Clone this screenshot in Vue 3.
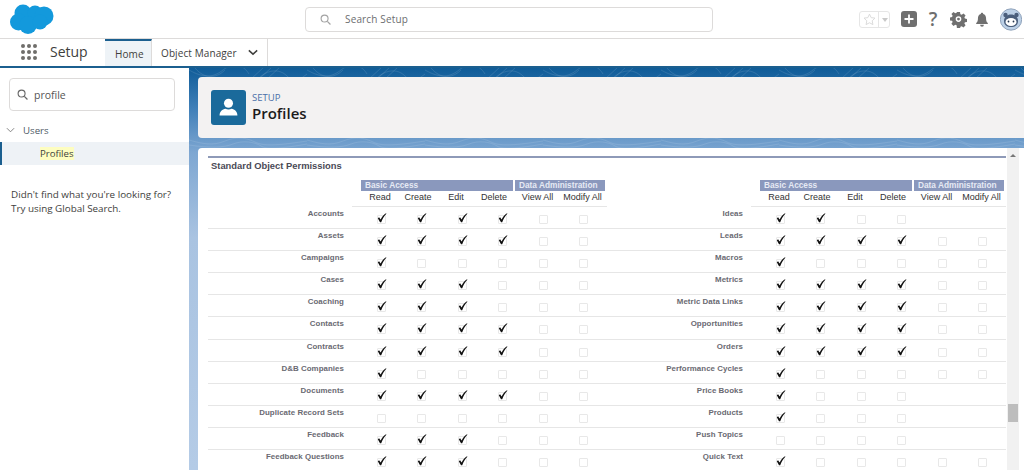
<template>
  <div class="page">
    <!-- Global header -->
    <header class="top">
      <svg class="logo" viewBox="0 0 44 30" width="44" height="30">
        <g fill="#1399dc">
          <circle cx="13" cy="9" r="8.5" />
          <circle cx="25" cy="9" r="7.5" />
          <circle cx="34" cy="12" r="9.5" />
          <circle cx="8.500" cy="18" r="8.500" />
          <circle cx="18" cy="21" r="9" />
          <circle cx="30" cy="18" r="7.500" />
        </g>
      </svg>
      <div class="global-search">
        <svg class="search-icon" viewBox="0 0 12 12" width="11" height="11">
          <circle cx="5" cy="5" r="3.800" fill="none" stroke="#a3a3a3" stroke-width="1.200" />
          <path d="M8 8l3.400 3.400" stroke="#a3a3a3" stroke-width="1.400" />
        </svg>
        <span>Search Setup</span>
      </div>
      <div class="tools">
        <div class="fav">
          <span class="fav-star">
            <svg viewBox="0 0 14 14" width="13" height="13">
              <path d="M7 1.200l1.800 3.800 4.100.5-3 2.900.8 4.100L7 10.500l-3.700 2 .8-4.100-3-2.900 4.100-.5z" fill="none" stroke="#d8d8d8" stroke-width="1" />
            </svg>
          </span>
          <span class="fav-drop"></span>
        </div>
        <svg class="add" viewBox="0 0 16 16" width="16" height="16">
          <rect width="16" height="16" rx="3" fill="#6f6f6f" />
          <path d="M8 3.500v9M3.500 8h9" stroke="#fff" stroke-width="1.800" />
        </svg>
        <span class="help">?</span>
        <svg class="gear" viewBox="0 0 18 18" width="17" height="17">
          <path d="M7.400 1h3.200l.4 2.200 1.400.6 1.900-1.300 2.200 2.200-1.300 1.900.6 1.400 2.200.4v3.200l-2.200.4-.6 1.400 1.300 1.900-2.200 2.200-1.900-1.300-1.400.6-.4 2.200H7.400L7 15.200l-1.400-.6-1.900 1.300-2.200-2.200 1.300-1.900-.6-1.400L0 10V6.800l2.200-.4.6-1.400-1.300-1.900 2.200-2.200 1.900 1.300 1.400-.6z" fill="#6f6f6f" transform="translate(0 .2) scale(1 .98)" />
          <circle cx="9" cy="8.600" r="3" fill="#fff" />
          <circle cx="9" cy="8.600" r="1.500" fill="#6f6f6f" />
        </svg>
        <svg class="bell" viewBox="0 0 14 16" width="14" height="15">
          <path d="M7 .8c.8 0 1.300.5 1.300 1.200 2 .6 3 2.200 3 4.300 0 3 .6 4.200 1.900 5.500v.9H.8v-.9C2.100 10.500 2.700 9.300 2.700 6.300c0-2.100 1-3.700 3-4.300 0-.7.5-1.200 1.300-1.200z" fill="#6f6f6f" />
          <path d="M5 13.700h4a2 2 0 0 1-4 0z" fill="#6f6f6f" />
        </svg>
        <svg class="avatar" viewBox="0 0 22 23" width="22" height="23">
          <circle cx="11" cy="11.500" r="10.700" fill="#bcd0e6" stroke="#7f93ad" stroke-width=".8" />
          <circle cx="5.500" cy="7" r="2.200" fill="#4b5f7c" />
          <circle cx="16.500" cy="7" r="2.200" fill="#4b5f7c" />
          <path d="M4 13c0-4 3-6.500 7-6.500s7 2.500 7 6.500-3 6-7 6-7-2-7-6z" fill="#4b5f7c" />
          <ellipse cx="11" cy="14" rx="5.500" ry="4" fill="#fff" />
          <circle cx="8.500" cy="13.500" r=".9" fill="#26364d" />
          <circle cx="13.500" cy="13.500" r=".9" fill="#26364d" />
        </svg>
      </div>
    </header>

    <!-- App nav -->
    <nav class="nav">
      <div class="launcher">
        <span v-for="n in 9" :key="n" class="dot"></span>
      </div>
      <span class="app-name">Setup</span>
      <a class="tab active">Home</a>
      <a class="tab">
        Object Manager
        <svg viewBox="0 0 12 8" width="10" height="7" class="tab-chevron">
          <path d="M1 1.500l5 4.500 5-4.500" fill="none" stroke="#3e3e3c" stroke-width="1.800" />
        </svg>
      </a>
    </nav>

    <div class="main">
      <!-- Setup tree -->
      <aside class="side">
        <div class="quick-find">
          <svg viewBox="0 0 12 12" width="11" height="11">
            <circle cx="5" cy="5" r="3.800" fill="none" stroke="#666" stroke-width="1.200" />
            <path d="M8 8l3.400 3.400" stroke="#666" stroke-width="1.400" />
          </svg>
          <span>profile</span>
        </div>
        <div class="tree-head">
          <svg viewBox="0 0 10 6" width="9" height="6">
            <path d="M1 1l4 4 4-4" fill="none" stroke="#777" stroke-width="1" />
          </svg>
          <span>Users</span>
        </div>
        <div class="tree-item"><mark>Profiles</mark></div>
        <p class="hint">Didn't find what you're looking for?<br />Try using Global Search.</p>
      </aside>

      <section class="content">
        <!-- topo lines behind the cards -->
        <svg class="topo" width="836" height="90">
          <defs>
            <pattern id="topo" width="118" height="90" patternUnits="userSpaceOnUse">
              <g fill="none" stroke="#fff" stroke-opacity=".16" stroke-width=".7">
                <path d="M0 2c14 8 24 8 34 0s20-6 26 4M6 0c10 12 22 10 30 2M70 10c8-8 20-10 28-2s12 4 20-2M74 0L62 11M82 0L70 11M90 0L78 11" />
                <path d="M0 72c14 4 24 6 36 1s22-3 30 1 20 4 52-1M0 77c20 3 34 3 44-1s22-2 28 2 24 2 46-2" />
              </g>
            </pattern>
          </defs>
          <rect width="836" height="90" fill="url(#topo)" />
        </svg>

        <div class="hero">
          <div class="hero-icon">
            <svg viewBox="0 0 20 20" width="21" height="21">
              <circle cx="10" cy="6" r="4.300" fill="#fff" />
              <path d="M1.500 17.500c0-3.800 2.800-5.800 5.500-6.300 1.800 1 4.200 1 6 0 2.700.5 5.500 2.500 5.500 6.300z" fill="#fff" />
            </svg>
          </div>
          <div class="hero-text">
            <div class="crumb">SETUP</div>
            <h1>Profiles</h1>
          </div>
        </div>

        <div class="panel">
          <div class="panel-body">
            <h2>Standard Object Permissions</h2>
            <div class="head-row">
              <template v-for="side in 2" :key="side">
                <span></span>
                <div class="group basic">
                  <div class="band">Basic Access</div>
                  <div class="cols four">
                    <span v-for="c in basicCols" :key="c">{{ c }}</span>
                  </div>
                </div>
                <div class="group admin">
                  <div class="band">Data Administration</div>
                  <div class="cols two">
                    <span v-for="c in adminCols" :key="c">{{ c }}</span>
                  </div>
                </div>
              </template>
            </div>
            <div v-for="(row, i) in rows" :key="i" class="row">
              <template v-for="side in row" :key="side[0]">
                <div class="obj">{{ side[0] }}</div>
                <div v-for="(p, k) in side[1].split('')" :key="k" class="cell">
                  <span v-if="p !== '-'" class="box">
                    <svg v-if="p === 'x'" class="tick" viewBox="0 0 10 10" width="10" height="10">
                      <path d="M.8 5.200l1.300-1 1.500 2.200C4.800 4 6.500 1.800 9 .2l.4.5C7.200 3 5.500 5.800 4.200 9.300H3z" fill="#111" />
                    </svg>
                  </span>
                </div>
              </template>
            </div>
          </div>
          <div class="scrollbar">
            <span class="arrow"></span>
            <span class="thumb"></span>
          </div>
        </div>
      </section>
    </div>
  </div>
</template>

<script setup>
const basicCols = ['Read', 'Create', 'Edit', 'Delete']
const adminCols = ['View All', 'Modify All']

// x = ticked, o = empty box, - = no box
const rows = [
  [['Accounts', 'xxxxoo'], ['Ideas', 'xxoo--']],
  [['Assets', 'xxxxoo'], ['Leads', 'xxxxoo']],
  [['Campaigns', 'xooooo'], ['Macros', 'xooooo']],
  [['Cases', 'xxxooo'], ['Metrics', 'xxxxoo']],
  [['Coaching', 'xxxooo'], ['Metric Data Links', 'xxxxoo']],
  [['Contacts', 'xxxxoo'], ['Opportunities', 'xxxxoo']],
  [['Contracts', 'xxxxoo'], ['Orders', 'xxxxoo']],
  [['D&B Companies', 'xooooo'], ['Performance Cycles', 'xooooo']],
  [['Documents', 'xxxxoo'], ['Price Books', 'xooo--']],
  [['Duplicate Record Sets', 'oooooo'], ['Products', 'xooo--']],
  [['Feedback', 'xxxooo'], ['Push Topics', 'oooo--']],
  [['Feedback Questions', 'xxxooo'], ['Quick Text', 'xooooo']]
]
</script>

<style>
html, body {
  margin: 0;
  background: #fff;
}
</style>

<style scoped>
.page {
  width: 1024px;
  height: 470px;
  overflow: hidden;
  display: flex;
  flex-direction: column;
  font-family: "Open Sans", "Liberation Sans", sans-serif;
  color: #3e3e3c;
}

/* Header */
.top {
  height: 38px;
  flex: none;
  display: flex;
  align-items: center;
  border-bottom: 1px solid #dddbda;
}
.logo {
  margin: 0 0 0 10px;
  flex: none;
}
.global-search {
  width: 408px;
  height: 25px;
  margin-left: 251px;
  flex: none;
  display: flex;
  align-items: center;
  box-sizing: border-box;
  border: 1px solid #dddbda;
  border-radius: 4px;
  padding-left: 14px;
  font-size: 10px;
  color: #6b6d70;
  letter-spacing: .15px;
}
.search-icon {
  margin-right: 14px;
}
.tools {
  display: flex;
  align-items: center;
  margin-left: 146px;
}
.fav {
  display: flex;
  width: 31px;
  height: 17px;
  box-sizing: border-box;
  border: 1px solid #e6e6e6;
  border-radius: 3px;
}
.fav-star {
  width: 18px;
  border-right: 1px solid #e6e6e6;
  display: flex;
  align-items: center;
  justify-content: center;
}
.fav-drop {
  flex: 1;
  position: relative;
}
.fav-drop::after {
  content: '';
  position: absolute;
  left: 3px;
  top: 6px;
  border: 3px solid transparent;
  border-top: 4px solid #c9c9c9;
}
.add {
  margin-left: 11px;
}
.help {
  width: 16px;
  margin-left: 8px;
  text-align: center;
  font-size: 19px;
  font-weight: 600;
  color: #6f6f6f;
  line-height: 20px;
}
.gear {
  margin-left: 9px;
}
.bell {
  margin-left: 8px;
}
.avatar {
  margin-left: 11px;
}

/* Nav */
.nav {
  height: 27px;
  flex: none;
  display: flex;
  align-items: stretch;
}
.launcher {
  width: 17px;
  height: 17px;
  margin: 5px 0 0 21px;
  display: grid;
  grid-template-columns: repeat(3, 4px);
  grid-auto-rows: 4px;
  gap: 2px;
}
.dot {
  background: #706e6b;
  border-radius: 50%;
}
.app-name {
  margin-left: 12px;
  width: 55px;
  font-size: 14px;
  line-height: 26px;
  color: #3e3e3c;
}
.tab {
  display: flex;
  align-items: center;
  padding: 0 9px;
  font-size: 10px;
  color: #3e3e3c;
  border-right: 1px solid #dddbda;
  letter-spacing: .1px;
}
.tab.active {
  background: #eef3f7;
  border-top: 2px solid #1b5f8f;
  padding: 0 10px;
  width: 47px;
  box-sizing: border-box;
}
.tab-chevron {
  margin-left: 11px;
}

/* Body */
.main {
  flex: 1;
  min-height: 0;
  display: flex;
  border-top: 2px solid #1b5f8f;
}
.side {
  width: 189px;
  flex: none;
  padding-top: 10px;
  box-sizing: border-box;
}
.quick-find {
  width: 166px;
  height: 33px;
  margin-left: 9px;
  box-sizing: border-box;
  border: 1px solid #dddbda;
  border-radius: 4px;
  display: flex;
  align-items: center;
  gap: 6px;
  padding-left: 7px;
  font-size: 10.500px;
  color: #555;
}
.tree-head {
  display: flex;
  align-items: center;
  gap: 8px;
  margin: 11px 0 0 6px;
  height: 16px;
  font-size: 9.700px;
  color: #4f5a66;
}
.tree-item {
  height: 23px;
  margin-top: 4px;
  background: #eef2f6;
  border-left: 2px solid #1b5f8f;
  padding-left: 38px;
  font-size: 9.600px;
  line-height: 23px;
}
mark {
  background: #fdfdc0;
  color: #3e3e3c;
}
.hint {
  margin: 22px 0 0 11px;
  font-size: 9.850px;
  line-height: 14px;
  color: #3e3e3c;
  white-space: nowrap;
}

/* Right side */
.content {
  flex: 1;
  min-width: 0;
  position: relative;
  padding: 9px 0 0 9px;
  box-sizing: border-box;
  background: linear-gradient(#0f5c98 0, #3f7fb8 40px, #7ea7d2 85px, #a9c3e1 170px, #b4cbe6 400px);
}
.topo {
  position: absolute;
  left: 0;
  top: 0;
}
.hero {
  position: relative;
  height: 61px;
  background: #f3f2f2;
  border-radius: 4px 0 0 4px;
  display: flex;
  align-items: center;
  gap: 6px;
  padding-left: 13px;
}
.hero-icon {
  width: 35px;
  height: 35px;
  background: #1a6a9b;
  border-radius: 3px;
  display: flex;
  align-items: center;
  justify-content: center;
}
.hero-text {
  margin-bottom: 1px;
}
.crumb {
  font-size: 9.500px;
  line-height: 12px;
  color: #4a6fa8;
}
h1 {
  margin: 0;
  font-size: 15px;
  line-height: 18px;
  font-weight: 600;
  color: #1b1b1b;
}
.panel {
  position: relative;
  margin-top: 10px;
  height: 322px;
  background: #fff;
  display: flex;
  overflow: hidden;
  border-radius: 4px 0 0 0;
}
.panel-body {
  width: 798px;
  margin-left: 10px;
  padding-top: 8px;
  font-family: "Liberation Sans", Arial, sans-serif;
}
h2 {
  margin: 0;
  height: 24px;
  border-top: 2px solid #8e9ab8;
  box-sizing: border-box;
  padding: 2px 0 0 3px;
  font-size: 9.400px;
  line-height: 12px;
  font-weight: 700;
  color: #4a4a56;
}
.head-row {
  display: grid;
  grid-template-columns: 153px 154px 90px 155px 154px 90px;
  height: 27px;
}
.band {
  height: 11px;
  background: #8a98bd;
  padding-left: 4px;
  font-size: 8.300px;
  line-height: 11px;
  font-weight: 700;
  color: #e6eaf4;
  white-space: nowrap;
}
.basic .band {
  margin-right: 2px;
}
.cols {
  position: relative;
  display: grid;
  height: 16px;
  box-sizing: border-box;
  padding-bottom: 4px;
  align-items: center;
  font-size: 9px;
  text-align: center;
  color: #333;
}
.cols.four {
  grid-template-columns: repeat(4, 38px);
}
.cols.two {
  grid-template-columns: repeat(2, 45px);
}
.cols::after {
  content: '';
  position: absolute;
  left: 0;
  right: -2px;
  bottom: 0;
  height: 1px;
  background: #e6e6e6;
}
.cols.four::after {
  left: -9px;
}
.row {
  display: grid;
  grid-template-columns: 153px repeat(6, 40.500px) 156px repeat(6, 40.500px);
  height: 22.100px;
  box-sizing: border-box;
  border-bottom: 1px solid #e6e6e6;
}
.obj {
  padding: 2px 17px 0 0;
  text-align: right;
  font-size: 7.900px;
  line-height: 10px;
  font-weight: 700;
  color: #6a6a72;
  letter-spacing: .05px;
  white-space: nowrap;
}
.cell {
  display: flex;
  justify-content: center;
  padding-top: 8px;
}
.box {
  position: relative;
  width: 9px;
  height: 9px;
  box-sizing: border-box;
  border: 1px solid #e8e8e8;
  border-radius: 1px;
}
.tick {
  position: absolute;
  left: -1px;
  top: -3px;
}
.scrollbar {
  position: relative;
  width: 12px;
  margin-left: 1px;
  background: #f1f1f1;
}
.arrow {
  position: absolute;
  left: 3px;
  top: 6px;
  border: 3px solid transparent;
  border-bottom: 3px solid #777;
  border-top: 0;
}
.thumb {
  position: absolute;
  left: 1px;
  top: 256px;
  width: 10px;
  height: 18px;
  background: #bdbdbd;
}
</style>
